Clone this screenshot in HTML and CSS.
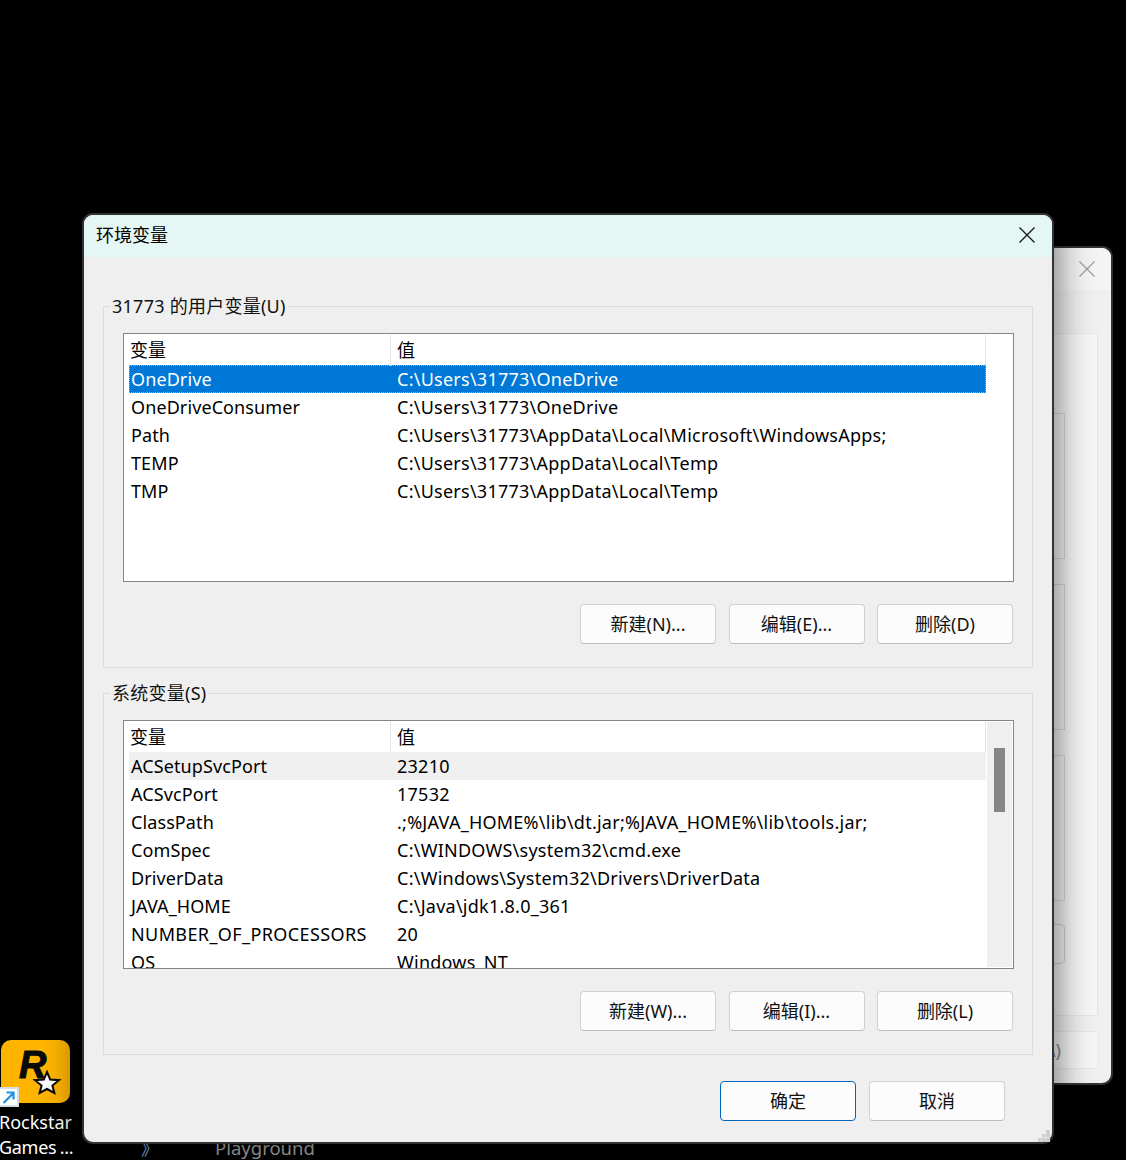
FILE: index.html
```html
<!DOCTYPE html>
<html lang="zh">
<head>
<meta charset="utf-8">
<title>环境变量</title>
<link rel="stylesheet" href="styles.css">
</head>
<body>
<div class="desktop">
  <div class="shortcut">
    <div class="app-icon">
      <svg class="app-svg" width="69" height="63" viewBox="0 0 69 63">
        <text class="app-r" x="18" y="38">R</text>
        <polygon class="app-star" points="46,32 49.2,39.6 58,40.2 51.4,45.6 53.4,53 46,49 38.6,53 40.6,45.6 34,40.2 42.8,39.6"/>
      </svg>
    </div>
    <div class="arrow-badge">
      <svg width="15" height="15" viewBox="0 0 15 15"><path d="M2.5 13 L12 3.5 M5.5 2.5 H12.5 V9.5" fill="none" stroke="#1e90e0" stroke-width="2.2"/></svg>
    </div>
    <div class="app-label">Rockstar<br><span class="app-label-cut">Games ...</span></div>
  </div>
  <div class="chevrons">》</div>
  <div class="playground">Playground</div>

  <div class="window back">
    <div class="back-title">
      <svg width="16" height="16" viewBox="0 0 16 16"><path d="M0.5 0.5 L15.5 15.5 M15.5 0.5 L0.5 15.5" stroke="#a0a0a0" stroke-width="1.4"/></svg>
    </div>
    <div class="back-body">
      <div class="back-panel">
        <div class="back-group"></div>
        <div class="back-group"></div>
        <div class="back-group"></div>
        <div class="back-button"></div>
      </div>
      <div class="back-apply">应用(A)</div>
    </div>
  </div>

  <div class="window front">
    <div class="title-bar">
      <span>环境变量</span>
      <svg width="16" height="16" viewBox="0 0 16 16"><path d="M0.5 0.5 L15.5 15.5 M15.5 0.5 L0.5 15.5" stroke="#1a1a1a" stroke-width="1.4"/></svg>
    </div>
    <div class="content">
      <fieldset class="group">
        <legend>31773 的用户变量(U)</legend>
        <div class="list">
          <div class="table">
            <div class="row head"><div class="cell head-name">变量</div><div class="cell value head-value">值</div></div>
            <div class="row selected"><div class="cell">OneDrive</div><div class="cell value">C:\Users\31773\OneDrive</div></div>
            <div class="row"><div class="cell">OneDriveConsumer</div><div class="cell value">C:\Users\31773\OneDrive</div></div>
            <div class="row"><div class="cell">Path</div><div class="cell value">C:\Users\31773\AppData\Local\Microsoft\WindowsApps;</div></div>
            <div class="row"><div class="cell">TEMP</div><div class="cell value">C:\Users\31773\AppData\Local\Temp</div></div>
            <div class="row"><div class="cell">TMP</div><div class="cell value">C:\Users\31773\AppData\Local\Temp</div></div>
          </div>
        </div>
        <div class="actions">
          <button class="btn">新建(N)...</button>
          <button class="btn">编辑(E)...</button>
          <button class="btn">删除(D)</button>
        </div>
      </fieldset>
      <fieldset class="group second">
        <legend>系统变量(S)</legend>
        <div class="list">
          <div class="table">
            <div class="row head"><div class="cell head-name">变量</div><div class="cell value head-value">值</div></div>
            <div class="row hover"><div class="cell">ACSetupSvcPort</div><div class="cell value">23210</div></div>
            <div class="row"><div class="cell">ACSvcPort</div><div class="cell value">17532</div></div>
            <div class="row"><div class="cell">ClassPath</div><div class="cell value">.;%JAVA_HOME%\lib\dt.jar;%JAVA_HOME%\lib\tools.jar;</div></div>
            <div class="row"><div class="cell">ComSpec</div><div class="cell value">C:\WINDOWS\system32\cmd.exe</div></div>
            <div class="row"><div class="cell">DriverData</div><div class="cell value">C:\Windows\System32\Drivers\DriverData</div></div>
            <div class="row"><div class="cell">JAVA_HOME</div><div class="cell value">C:\Java\jdk1.8.0_361</div></div>
            <div class="row"><div class="cell wide-name">NUMBER_OF_PROCESSORS</div><div class="cell value">20</div></div>
            <div class="row"><div class="cell">OS</div><div class="cell value">Windows_NT</div></div>
          </div>
          <div class="scrollbar"><div class="thumb"></div></div>
        </div>
        <div class="actions">
          <button class="btn">新建(W)...</button>
          <button class="btn">编辑(I)...</button>
          <button class="btn">删除(L)</button>
        </div>
      </fieldset>
      <div class="footer">
        <button class="btn primary">确定</button>
        <button class="btn">取消</button>
      </div>
    </div>
    <svg class="grip" width="12" height="12" viewBox="0 0 12 12">
      <path d="M8 0h4v4H8zM4 4h3.5v3.5H4zM8 4h4v3.5H8zM0 8h3.5v4H0zM4 8h3.5v4H4zM8 8h4v4H8z" fill="#cfcfcf"/>
    </svg>
  </div>
</div>
</body>
</html>
```
FILE: styles.css
```css
* { box-sizing: border-box; }
html, body { margin: 0; padding: 0; background: #000; }
body {
  font-family: "Noto Sans", "Noto Sans CJK SC", sans-serif;
  font-size: 18px;
  color: #000;
}
.desktop { position: relative; width: 1126px; height: 1160px; overflow: hidden; background: #000; }

/* desktop items */
.shortcut { position: absolute; left: 0; top: 1040px; width: 76px; }
.app-icon {
  width: 69px; height: 63px; margin-left: 1px; border-radius: 10px;
  background: #ffb500;
}
.app-svg { display: block; }
.app-r { font-family: "Liberation Sans", sans-serif; font-weight: 700; font-style: italic; font-size: 38px; fill: #0a0a0a; stroke: #0a0a0a; stroke-width: 1; }
.app-star { fill: #fff; stroke: #0a0a0a; stroke-width: 2; }
.arrow-badge {
  position: absolute; left: 0; top: 47px; width: 19px; height: 20px;
  background: #fff; border: 2px solid #d5dde6; border-left: 0;
  display: flex; align-items: center; justify-content: center;
}
.app-label { color: #fff; line-height: 25px; margin-top: 7px; margin-left: -1px; white-space: nowrap; }
.app-label-cut { letter-spacing: -.3px; word-spacing: -1px; }
.chevrons { position: absolute; left: 141px; top: 1136px; color: #88b4e0; line-height: 25px; }
.playground { position: absolute; left: 215px; top: 1135px; color: #a8a8a8; line-height: 25px; font-size: 18.5px; }

/* windows */
.window { position: absolute; border: 2px solid #333; border-radius: 11px; overflow: hidden; }
.front {
  left: 82px; top: 213px; width: 972px; height: 931px;
  background: #efefef; overflow: visible;
  box-shadow: 0 0 34px 4px rgba(0, 0, 0, .5);
}
.back { left: 700px; top: 246px; width: 413px; height: 839px; background: #f0f0f0; }

.back-title { height: 42px; background: #f4f4f4; display: flex; justify-content: flex-end; align-items: center; padding-right: 16px; }
.back-body { padding: 43px 13px 0 0; display: flex; flex-direction: column; align-items: flex-end; }
.back-panel {
  width: 360px; height: 683px; background: #f6f6f6; border: 1px solid #e6e6e6;
  display: flex; flex-direction: column; align-items: flex-end; padding: 79px 32px 0 0;
}
.back-group { width: 300px; height: 146px; border: 1px solid #d8d8d8; margin-bottom: 25px; }
.back-button { width: 300px; height: 40px; border: 1px solid #d0d0d0; border-radius: 4px; margin-top: -2px; }
.back-apply {
  margin: 15px -1px 0 0; width: 136px; height: 38px; line-height: 36px; border: 1px solid #e8e8e8; border-radius: 4px;
  background: #f5f5f5; color: #7c8ba0; padding-right: 37px; text-align: right; white-space: nowrap;
}

/* title */
.title-bar {
  height: 42px; background: #e4f7f5; border-radius: 9px 9px 0 0;
  display: flex; justify-content: space-between; align-items: center;
  padding: 0 17px 2px 12px; line-height: 1;
}

/* body */
.content { padding: 36px 0 0 19px; }
.group {
  margin: 0; width: 930px; min-width: 0; border: 1px solid #dcdcdc;
  padding: 14px 19px 23px 19px;
}
.group legend { margin-left: -13px; padding: 0 2px; height: 26px; line-height: 26px; color: #111; letter-spacing: .25px; }
.second { margin-top: 12px; }

.list {
  width: 891px; height: 249px; background: #fff; border: 1px solid #85858f;
  display: flex; overflow: hidden; padding-left: 5px;
}
.table { width: 857px; flex: none; }
.row { display: grid; grid-template-columns: 261px 596px; height: 28px; line-height: 28px; white-space: nowrap; letter-spacing: .1px; }
.cell { padding-left: 2px; }
.wide-name { letter-spacing: .4px; }
.value { padding-left: 7px; letter-spacing: .25px; }
.head { height: 31px; line-height: 31px; letter-spacing: 0; padding-top: 1px; }
.head-name { padding-left: 1px; }
.head-value { border-left: 1px solid #e3e3e3; border-right: 1px solid #e3e3e3; padding-left: 6px; }
.selected { background: #0078d7; color: #fff; outline: 1px dotted #f0a040; outline-offset: -1px; }
.hover { background: #f0f0f0; }

.scrollbar { width: 25px; flex: none; margin: 1px 0 1px 1px; background: #efefef; padding: 26px 7px 0; }
.thumb { width: 11px; height: 64px; background: #868686; }

.actions { display: flex; justify-content: flex-end; gap: 12.5px; margin-top: 22px; }
.btn {
  width: 136px; height: 40px; padding: 0 0 2px; font: inherit; color: #111;
  background: #fcfcfc; border: 1px solid #d0d0d0; border-bottom-color: #bdbdbd; border-radius: 4px;
}
.footer { display: flex; justify-content: flex-end; gap: 13px; margin-top: 26px; padding-right: 47px; }
.primary { border: 1px solid #0067c0; }

.grip { position: absolute; right: 2px; bottom: 0; }
```
